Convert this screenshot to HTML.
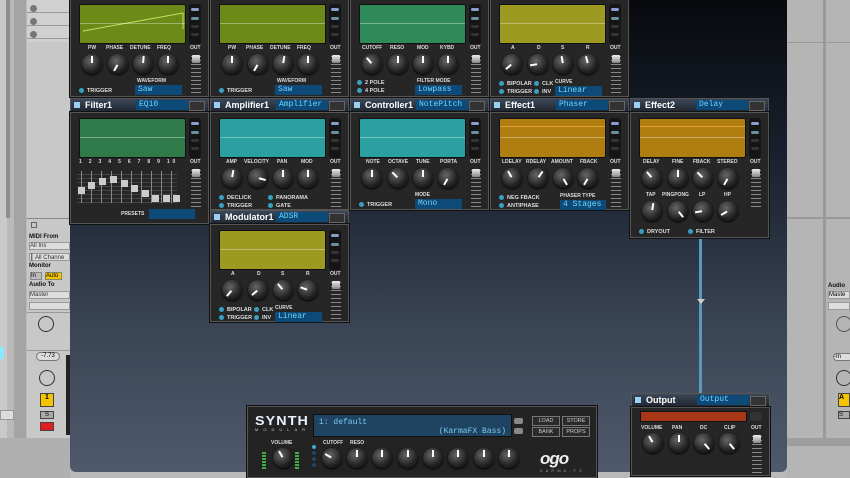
<!DOCTYPE html>
<html><head><meta charset="utf-8"><style>
*{margin:0;padding:0;box-sizing:border-box}
body{width:850px;height:478px;overflow:hidden;position:relative;background:#b9b9b9;font-family:"Liberation Sans",sans-serif}
.a{position:absolute}
#cv{left:70px;top:0;width:717px;height:472px;background:linear-gradient(#07090d 0%,#1b2230 35%,#3a4556 70%,#4e5a6b 100%);border-radius:0 0 6px 6px}
.mod{position:absolute;width:139px;background:#262626;border:1px solid #555;box-shadow:0 0 0 1px #111}
.scr{position:absolute;left:8px;top:5px;width:107px;height:40px;border:1px solid #111;border-radius:2px}
.scr:after{content:"";position:absolute;left:0;right:0;top:18px;height:1px;background:rgba(255,255,255,.35)}
.leds{position:absolute;left:118px;top:5px;width:12px;height:40px;background:#151515;border-radius:3px}
.leds:before{content:"";position:absolute;left:2px;top:4px;width:8px;height:3px;border-radius:2px;background:#8aa0d0;box-shadow:0 9px 0 #6a8fa0,0 17px 0 #333,0 25px 0 #333}
.lb{position:absolute;top:46px;font-size:5px;color:#ddd;font-weight:bold;white-space:nowrap}
.k{position:absolute;width:20px;height:20px;border-radius:50%;background:radial-gradient(circle at 40% 35%,#666,#222 60%,#0a0a0a);box-shadow:0 1px 2px #000}
.k i{position:absolute;left:9px;top:2px;width:2px;height:7px;background:#fff;transform-origin:1px 8px}
.sl{position:absolute;left:120px;top:54px;width:10px;height:42px;background:repeating-linear-gradient(#262626 0 3px,#888 3px 4px)}
.sl:after{content:"";position:absolute;left:1px;top:2px;width:8px;height:8px;background:linear-gradient(#eee,#888);border-radius:1px}
.out{position:absolute;left:119px;top:46px;font-size:5px;color:#ddd;font-weight:bold}
.cb{position:absolute;font-size:5.5px;color:#ddd;font-weight:bold;white-space:nowrap;padding-left:8px}
.cb:before{content:"";position:absolute;left:0;top:0px;width:5px;height:5px;border-radius:50%;background:#3aa0c0}
.fd{position:absolute;height:10px;background:#0d4a78;color:#6fd4ff;font-family:"Liberation Mono",monospace;font-size:8px;line-height:10px;padding-left:3px;white-space:nowrap}
.hd{position:absolute;width:139px;height:14px;background:linear-gradient(#3b4656,#202833);border:1px solid #555}
.hd b{position:absolute;left:14px;top:1px;color:#fff;font-size:9px}
.hd:before{content:"";position:absolute;left:3px;top:3px;width:6px;height:6px;background:#9cd0f0}
.hd .fd{top:1px;left:65px;width:52px}
.hd:after{content:"";position:absolute;right:3px;top:2px;width:14px;height:8px;background:#333;border:1px solid #666}
.gl{font-size:6px;color:#111;font-weight:bold}
</style></head><body>
<div class="a" style="left:0;top:0;width:7px;height:478px;background:#c9c9c9"></div>
<div class="a" style="left:6px;top:0;width:4px;height:218px;background:#8e8e8e"></div>
<div class="a" style="left:14px;top:0;width:12px;height:438px;background:#a4a4a4"></div>
<div class="a" style="left:27px;top:0;width:43px;height:438px;background:#c8c8c8"></div>
<div class="a" style="left:27px;top:0;width:43px;height:42px;background:repeating-linear-gradient(#d0d0d0 0 12px,#999 12px 13px)"></div>
<div class="a" style="left:30px;top:5px;width:7px;height:7px;border-radius:50%;background:#777;box-shadow:0 13px 0 #777,0 26px 0 #777"></div>
<div class="a" style="left:27px;top:218px;width:43px;height:1px;background:#888"></div>
<div class="a" style="left:31px;top:222px;width:6px;height:6px;border:1px solid #666"></div>
<div class="a gl" style="left:29px;top:234px">MIDI From</div>
<div class="a" style="left:29px;top:242px;width:41px;height:8px;background:#ddd;border:1px solid #999;font-size:6px;color:#333">All Ins</div>
<div class="a" style="left:29px;top:253px;width:41px;height:8px;background:#ddd;border:1px solid #999;font-size:6px;color:#333">&#x2503; All Channe</div>
<div class="a gl" style="left:29px;top:263px">Monitor</div>
<div class="a" style="left:30px;top:272px;width:12px;height:8px;background:#bbb;border:1px solid #888;font-size:6px">In</div>
<div class="a" style="left:45px;top:272px;width:17px;height:8px;background:#f4c400;border:1px solid #886;font-size:6px">Auto</div>
<div class="a gl" style="left:29px;top:282px">Audio To</div>
<div class="a" style="left:29px;top:291px;width:41px;height:8px;background:#ddd;border:1px solid #999;font-size:6px;color:#333">Master</div>
<div class="a" style="left:29px;top:302px;width:41px;height:8px;background:#ddd;border:1px solid #999"></div>
<div class="a" style="left:27px;top:312px;width:43px;height:1px;background:#999"></div>
<div class="a" style="left:38px;top:316px;width:16px;height:16px;border-radius:50%;border:1.5px solid #333"></div>
<div class="a" style="left:27px;top:350px;width:43px;height:1px;background:#999"></div>
<div class="a" style="left:36px;top:352px;width:24px;height:9px;border:1px solid #777;border-radius:5px;font-size:6px;text-align:center;background:#ddd">-7.73</div>
<div class="a" style="left:39px;top:370px;width:16px;height:16px;border-radius:50%;border:1.5px solid #333"></div>
<div class="a" style="left:40px;top:393px;width:14px;height:14px;background:#f4c400;border:1px solid #444;font-size:7px;text-align:center;font-weight:bold">1</div>
<div class="a" style="left:40px;top:411px;width:14px;height:8px;background:#aaa;border:1px solid #444;font-size:6px;text-align:center">S</div>
<div class="a" style="left:40px;top:422px;width:14px;height:9px;background:#e02020;border:1px solid #444"></div>
<div class="a" style="left:66px;top:355px;width:4px;height:80px;background:#222"></div>
<div class="a" style="left:0;top:347px;width:4px;height:12px;background:#8ee8ff"></div>
<div class="a" style="left:0;top:410px;width:14px;height:10px;background:#ddd;border:1px solid #999"></div>
<div class="a" style="left:0;top:438px;width:70px;height:40px;background:#b0b0b0"></div>
<div class="a" style="left:787px;top:0;width:63px;height:478px;background:#b5b5b5"></div>
<div class="a" style="left:823px;top:0;width:3px;height:438px;background:#9a9a9a"></div>
<div class="a" style="left:787px;top:42px;width:63px;height:1px;background:#999"></div>
<div class="a" style="left:787px;top:217px;width:63px;height:2px;background:#999"></div>
<div class="a gl" style="left:828px;top:283px">Audio</div>
<div class="a" style="left:828px;top:291px;width:22px;height:8px;background:#ddd;border:1px solid #999;font-size:6px">Maste</div>
<div class="a" style="left:828px;top:302px;width:22px;height:8px;background:#ddd;border:1px solid #999"></div>
<div class="a" style="left:836px;top:316px;width:16px;height:16px;border-radius:50%;border:1.5px solid #555"></div>
<div class="a" style="left:833px;top:353px;width:20px;height:8px;border:1px solid #777;border-radius:4px;font-size:6px;background:#ddd">-In</div>
<div class="a" style="left:836px;top:370px;width:16px;height:16px;border-radius:50%;border:1.5px solid #333"></div>
<div class="a" style="left:838px;top:393px;width:12px;height:14px;background:#f4c400;border:1px solid #444;font-size:7px;font-weight:bold">A</div>
<div class="a" style="left:838px;top:411px;width:12px;height:8px;background:#aaa;border:1px solid #444;font-size:6px">S</div>
<div class="a" style="left:787px;top:438px;width:63px;height:8px;background:#9e9e9e"></div>

<div class="a" id="cv"></div>
<div class="a" style="left:699px;top:237px;width:3px;height:157px;background:#5a9ab8"></div>
<div class="a" style="left:697px;top:299px;width:0;height:0;border-left:4px solid transparent;border-right:4px solid transparent;border-top:5px solid #ccc"></div>

<div class="mod" style="left:70px;top:-2px;height:99px"><div class="scr" style="background:#6b8a18"><svg width="107" height="40" style="position:absolute;left:0;top:0"><path d="M3 26 L103 8 L103 24" stroke="#c8e060" fill="none"/></svg></div><div class="leds"></div>
<div class="lb" style="left:17px">PW</div><div class="lb" style="left:35px">PHASE</div><div class="lb" style="left:59px">DETUNE</div><div class="lb" style="left:86px">FREQ</div><div class="out">OUT</div>
<div class="k" style="left:11px;top:55px"><i></i></div><div class="k" style="left:37px;top:55px"><i style="transform:rotate(-150deg)"></i></div><div class="k" style="left:62px;top:55px"><i style="transform:rotate(5deg)"></i></div><div class="k" style="left:87px;top:55px"><i></i></div><div class="sl"></div>
<div class="lb" style="left:66px;top:79px">WAVEFORM</div><div class="cb" style="left:8px;top:89px">TRIGGER</div><div class="fd" style="left:64px;top:86px;width:47px">Saw</div></div>
<div class="mod" style="left:210px;top:-2px;height:99px"><div class="scr" style="background:#6b8a18"></div><div class="leds"></div>
<div class="lb" style="left:17px">PW</div><div class="lb" style="left:35px">PHASE</div><div class="lb" style="left:59px">DETUNE</div><div class="lb" style="left:86px">FREQ</div><div class="out">OUT</div>
<div class="k" style="left:11px;top:55px"><i></i></div><div class="k" style="left:37px;top:55px"><i style="transform:rotate(-150deg)"></i></div><div class="k" style="left:62px;top:55px"><i style="transform:rotate(10deg)"></i></div><div class="k" style="left:87px;top:55px"><i></i></div><div class="sl"></div>
<div class="lb" style="left:66px;top:79px">WAVEFORM</div><div class="cb" style="left:8px;top:89px">TRIGGER</div><div class="fd" style="left:64px;top:86px;width:47px">Saw</div></div>
<div class="mod" style="left:350px;top:-2px;height:99px"><div class="scr" style="background:#2f8a5a"></div><div class="leds"></div>
<div class="lb" style="left:11px">CUTOFF</div><div class="lb" style="left:39px">RESO</div><div class="lb" style="left:66px">MOD</div><div class="lb" style="left:89px">KYBD</div><div class="out">OUT</div>
<div class="k" style="left:11px;top:55px"><i style="transform:rotate(-40deg)"></i></div><div class="k" style="left:37px;top:55px"><i></i></div><div class="k" style="left:62px;top:55px"><i></i></div><div class="k" style="left:87px;top:55px"><i></i></div><div class="sl"></div>
<div class="lb" style="left:66px;top:79px">FILTER MODE</div><div class="cb" style="left:6px;top:81px">2 POLE</div><div class="cb" style="left:6px;top:89px">4 POLE</div><div class="fd" style="left:64px;top:86px;width:47px">Lowpass</div></div>
<div class="mod" style="left:490px;top:-2px;height:99px"><div class="scr" style="background:#9c9a20"></div><div class="leds"></div>
<div class="lb" style="left:20px">A</div><div class="lb" style="left:46px">D</div><div class="lb" style="left:70px">S</div><div class="lb" style="left:95px">R</div><div class="out">OUT</div>
<div class="k" style="left:11px;top:55px"><i style="transform:rotate(-130deg)"></i></div><div class="k" style="left:37px;top:55px"><i style="transform:rotate(-100deg)"></i></div><div class="k" style="left:62px;top:55px"><i style="transform:rotate(-10deg)"></i></div><div class="k" style="left:87px;top:55px"><i style="transform:rotate(-15deg)"></i></div><div class="sl"></div>
<div class="cb" style="left:8px;top:82px">BIPOLAR</div><div class="cb" style="left:43px;top:82px">CLK</div><div class="lb" style="left:64px;top:80px">CURVE</div><div class="cb" style="left:8px;top:90px">TRIGGER</div><div class="cb" style="left:43px;top:90px">INV</div><div class="fd" style="left:64px;top:87px;width:47px">Linear</div></div>

<div class="hd" style="left:70px;top:98px"><b>Filter1</b><div class="fd">EQ10</div></div>
<div class="hd" style="left:210px;top:98px"><b>Amplifier1</b><div class="fd">Amplifier</div></div>
<div class="hd" style="left:350px;top:98px"><b>Controller1</b><div class="fd">NotePitch</div></div>
<div class="hd" style="left:490px;top:98px"><b>Effect1</b><div class="fd">Phaser</div></div>
<div class="hd" style="left:630px;top:98px"><b>Effect2</b><div class="fd">Delay</div></div>

<div class="mod" style="left:70px;top:112px;height:112px"><div class="scr" style="background:#2e7a48"></div><div class="leds"></div>
<div class="lb" style="left:8px;letter-spacing:2.8px">1 2 3 4 5 6 7 8 9 10</div><div class="out">OUT</div><div class="sl"></div>
<div class="a" style="left:6px;top:58px;width:100px;height:32px;background:repeating-linear-gradient(90deg,transparent 0 4px,#888 4px 5px,transparent 5px 10px),repeating-linear-gradient(#262626 0 3px,#444 3px 4px)"></div>
<div class="a" style="left:7px;top:74px;width:7px;height:7px;background:#ccc;box-shadow:10px -5px 0 #ccc,21px -9px 0 #ccc,32px -11px 0 #ccc,43px -7px 0 #ccc,53px -2px 0 #ccc,64px 3px 0 #ccc,74px 8px 0 #ccc,85px 8px 0 #ccc,95px 8px 0 #ccc"></div>
<div class="lb" style="left:50px;top:98px">PRESETS</div><div class="fd" style="left:78px;top:96px;width:46px"></div></div>
<div class="mod" style="left:210px;top:112px;height:98px"><div class="scr" style="background:#2aa0a0"></div><div class="leds"></div>
<div class="lb" style="left:15px">AMP</div><div class="lb" style="left:33px">VELOCITY</div><div class="lb" style="left:66px">PAN</div><div class="lb" style="left:90px">MOD</div><div class="out">OUT</div>
<div class="k" style="left:11px;top:55px"><i style="transform:rotate(10deg)"></i></div><div class="k" style="left:37px;top:55px"><i style="transform:rotate(105deg)"></i></div><div class="k" style="left:62px;top:55px"><i></i></div><div class="k" style="left:87px;top:55px"><i></i></div><div class="sl"></div>
<div class="cb" style="left:8px;top:82px">DECLICK</div><div class="cb" style="left:8px;top:90px">TRIGGER</div><div class="cb" style="left:57px;top:82px">PANORAMA</div><div class="cb" style="left:57px;top:90px">GATE</div></div>
<div class="mod" style="left:350px;top:112px;height:98px"><div class="scr" style="background:#2aa0a0"></div><div class="leds"></div>
<div class="lb" style="left:15px">NOTE</div><div class="lb" style="left:37px">OCTAVE</div><div class="lb" style="left:65px">TUNE</div><div class="lb" style="left:89px">PORTA</div><div class="out">OUT</div>
<div class="k" style="left:11px;top:55px"><i></i></div><div class="k" style="left:37px;top:55px"><i style="transform:rotate(-45deg)"></i></div><div class="k" style="left:62px;top:55px"><i></i></div><div class="k" style="left:87px;top:55px"><i style="transform:rotate(-150deg)"></i></div><div class="sl"></div>
<div class="lb" style="left:64px;top:79px">MODE</div><div class="cb" style="left:8px;top:89px">TRIGGER</div><div class="fd" style="left:64px;top:86px;width:47px">Mono</div></div>
<div class="mod" style="left:490px;top:112px;height:98px"><div class="scr" style="background:#b07e10"><div class="a" style="left:0;right:0;top:7px;height:1px;background:#e0a030"></div></div><div class="leds"></div>
<div class="lb" style="left:11px">LDELAY</div><div class="lb" style="left:35px">RDELAY</div><div class="lb" style="left:60px">AMOUNT</div><div class="lb" style="left:89px">FBACK</div><div class="out">OUT</div>
<div class="k" style="left:11px;top:55px"><i style="transform:rotate(-30deg)"></i></div><div class="k" style="left:37px;top:55px"><i style="transform:rotate(35deg)"></i></div><div class="k" style="left:62px;top:55px"><i style="transform:rotate(150deg)"></i></div><div class="k" style="left:87px;top:55px"><i style="transform:rotate(-150deg)"></i></div><div class="sl"></div>
<div class="cb" style="left:8px;top:82px">NEG FBACK</div><div class="cb" style="left:8px;top:90px">ANTIPHASE</div><div class="lb" style="left:69px;top:80px">PHASER TYPE</div><div class="fd" style="left:69px;top:87px;width:46px">4 Stages</div></div>
<div class="mod" style="left:630px;top:112px;height:126px"><div class="scr" style="background:#b07e10"><div class="a" style="left:0;right:0;top:7px;height:1px;background:#e0a030"></div></div><div class="leds"></div>
<div class="lb" style="left:12px">DELAY</div><div class="lb" style="left:41px">FINE</div><div class="lb" style="left:62px">FBACK</div><div class="lb" style="left:86px">STEREO</div><div class="out">OUT</div>
<div class="k" style="left:11px;top:55px"><i style="transform:rotate(-40deg)"></i></div><div class="k" style="left:37px;top:55px"><i></i></div><div class="k" style="left:62px;top:55px"><i style="transform:rotate(-45deg)"></i></div><div class="k" style="left:87px;top:55px"><i style="transform:rotate(-150deg)"></i></div><div class="sl"></div>
<div class="lb" style="left:15px;top:79px">TAP</div><div class="lb" style="left:31px;top:79px">PINGPONG</div><div class="lb" style="left:68px;top:79px">LP</div><div class="lb" style="left:93px;top:79px">HP</div>
<div class="k" style="left:11px;top:88px"><i style="transform:rotate(10deg)"></i></div><div class="k" style="left:37px;top:88px"><i style="transform:rotate(140deg)"></i></div><div class="k" style="left:62px;top:88px"><i style="transform:rotate(-100deg)"></i></div><div class="k" style="left:87px;top:88px"><i style="transform:rotate(-120deg)"></i></div>
<div class="cb" style="left:8px;top:116px">DRYOUT</div><div class="cb" style="left:57px;top:116px">FILTER</div></div>
<div class="hd" style="left:210px;top:210px"><b>Modulator1</b><div class="fd">ADSR</div></div>
<div class="mod" style="left:210px;top:224px;height:98px"><div class="scr" style="background:#9c9a20"></div><div class="leds"></div>
<div class="lb" style="left:20px">A</div><div class="lb" style="left:46px">D</div><div class="lb" style="left:70px">S</div><div class="lb" style="left:95px">R</div><div class="out">OUT</div>
<div class="k" style="left:11px;top:55px"><i style="transform:rotate(-140deg)"></i></div><div class="k" style="left:37px;top:55px"><i style="transform:rotate(-130deg)"></i></div><div class="k" style="left:62px;top:55px"><i style="transform:rotate(-40deg)"></i></div><div class="k" style="left:87px;top:55px"><i style="transform:rotate(-70deg)"></i></div><div class="sl"></div>
<div class="cb" style="left:8px;top:82px">BIPOLAR</div><div class="cb" style="left:43px;top:82px">CLK</div><div class="lb" style="left:64px;top:80px">CURVE</div><div class="cb" style="left:8px;top:90px">TRIGGER</div><div class="cb" style="left:43px;top:90px">INV</div><div class="fd" style="left:64px;top:87px;width:47px">Linear</div></div>
<div class="hd" style="left:631px;top:393px"><b>Output</b><div class="fd">Output</div></div>
<div class="mod" style="left:631px;top:407px;height:69px"><div class="a" style="left:8px;top:3px;width:107px;height:11px;background:#a83818;border:1px solid #111"></div><div class="a" style="left:118px;top:4px;width:12px;height:9px;background:#333;border-radius:3px"></div>
<div class="lb" style="left:9px;top:17px">VOLUME</div><div class="lb" style="left:40px;top:17px">PAN</div><div class="lb" style="left:68px;top:17px">DC</div><div class="lb" style="left:92px;top:17px">CLIP</div><div class="out" style="top:17px">OUT</div>
<div class="k" style="left:11px;top:25px"><i style="transform:rotate(-30deg)"></i></div><div class="k" style="left:37px;top:25px"><i></i></div><div class="k" style="left:62px;top:25px"><i style="transform:rotate(140deg)"></i></div><div class="k" style="left:87px;top:25px"><i style="transform:rotate(140deg)"></i></div><div class="sl" style="top:25px"></div></div>
<div class="a" style="left:247px;top:406px;width:350px;height:72px;background:#232323;border:1px solid #555;box-shadow:0 0 0 1px #111">
<div class="a" style="left:7px;top:6px;color:#e8f0ff;font-weight:bold;font-size:13px;letter-spacing:1px;transform:scaleX(1.1);transform-origin:left">SYNTH</div>
<div class="a" style="left:7px;top:20px;color:#ccd;font-size:4px;letter-spacing:5px">MODULAR</div>
<div class="a" style="left:65px;top:7px;width:199px;height:23px;background:#1e4462;border:1px solid #111;font-family:'Liberation Mono',monospace;font-size:8px;color:#7ccaf0;padding:3px 5px">1: default<div style="text-align:right">(KarmaFX Bass)</div></div>
<div class="a" style="left:266px;top:11px;width:9px;height:6px;background:#888;border-radius:2px;box-shadow:0 10px 0 #888"></div>
<div class="a" style="left:284px;top:9px;width:28px;height:10px;border:1px solid #777;background:#2a2a2a;color:#ccc;font-size:5.5px;text-align:center;line-height:8px">LOAD</div>
<div class="a" style="left:314px;top:9px;width:28px;height:10px;border:1px solid #777;background:#2a2a2a;color:#ccc;font-size:5.5px;text-align:center;line-height:8px">STORE</div>
<div class="a" style="left:284px;top:20px;width:28px;height:10px;border:1px solid #777;background:#2a2a2a;color:#ccc;font-size:5.5px;text-align:center;line-height:8px">BANK</div>
<div class="a" style="left:314px;top:20px;width:28px;height:10px;border:1px solid #777;background:#2a2a2a;color:#ccc;font-size:5.5px;text-align:center;line-height:8px">PROPS</div>
<div class="lb" style="left:23px;top:33px">VOLUME</div><div class="lb" style="left:75px;top:33px">CUTOFF</div><div class="lb" style="left:102px;top:33px">RESO</div>
<div class="a" style="left:14px;top:45px;width:4px;height:18px;background:repeating-linear-gradient(#4a4 0 2px,#222 2px 3px)"></div>
<div class="a" style="left:47px;top:45px;width:4px;height:18px;background:repeating-linear-gradient(#4a4 0 2px,#222 2px 3px)"></div>
<div class="a" style="left:64px;top:38px;width:4px;height:4px;border-radius:50%;background:#4ac;box-shadow:0 6px 0 #246,0 12px 0 #246,0 18px 0 #246"></div>
<div class="k" style="left:25px;top:41px"><i style="transform:rotate(-30deg)"></i></div>
<div class="k" style="left:74px;top:41px"><i style="transform:rotate(-60deg)"></i></div>
<div class="k" style="left:99px;top:41px"><i></i></div><div class="k" style="left:124px;top:41px"><i></i></div><div class="k" style="left:150px;top:41px"><i></i></div><div class="k" style="left:175px;top:41px"><i></i></div><div class="k" style="left:200px;top:41px"><i></i></div><div class="k" style="left:226px;top:41px"><i></i></div><div class="k" style="left:251px;top:41px"><i></i></div>
<div class="a" style="left:292px;top:42px;color:#eee;font-style:italic;font-weight:bold;font-size:17px;letter-spacing:-1px">ogo</div>
<div class="a" style="left:292px;top:61px;color:#999;font-size:4px;letter-spacing:3px">KARMA-FX</div>
</div>
</body></html>
